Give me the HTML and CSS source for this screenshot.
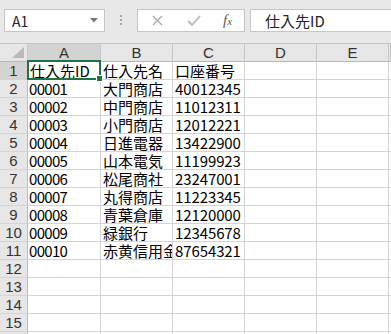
FILE: index.html
```html
<!DOCTYPE html>
<html lang="ja">
<head>
<meta charset="utf-8">
<title>Sheet</title>
<link rel="stylesheet" href="styles.css">
</head>
<body>
<div class="app">
  <div class="toolbar">
    <div class="namebox">
      <span class="nb-text">A1</span>
      <svg class="nb-arrow" width="8" height="5" viewBox="0 0 8 5"><path d="M0 0H8L4 4.5Z" fill="#7a7a7a"/></svg>
    </div>
    <div class="grip">
      <svg width="3" height="11" viewBox="0 0 3 11"><rect x="0" y="0" width="2" height="2" fill="#a6a6a6"/><rect x="0" y="4" width="2" height="2" fill="#a6a6a6"/><rect x="0" y="8" width="2" height="2" fill="#a6a6a6"/></svg>
    </div>
    <div class="fbuttons">
      <svg class="fb-x" width="11" height="11" viewBox="0 0 11 11"><path d="M1 1L10 10M10 1L1 10" stroke="#a8a8a8" stroke-width="1.3" fill="none"/></svg>
      <svg class="fb-ok" width="14" height="11" viewBox="0 0 14 11"><path d="M1 6L5 10L13 1" stroke="#b8b8b8" stroke-width="1.8" fill="none"/></svg>
      <span class="fx">f<span class="fx-x">x</span></span>
    </div>
    <div class="finput">仕入先ID</div>
  </div>
  <div class="sheet">
    <div class="hc corner"><svg width="12" height="11" viewBox="0 0 12 11"><path d="M12 0V11H0Z" fill="#b9b9b9"/></svg></div>
    <div class="hc colh sel">A</div>
    <div class="hc colh">B</div>
    <div class="hc colh">C</div>
    <div class="hc colh">D</div>
    <div class="hc colh">E</div>
    <div class="hc colh rest"></div>

    <div class="rh sel">1</div>
    <div class="c a1">仕入先ID<div class="selbox"><div class="handle"></div></div></div>
    <div class="c">仕入先名</div>
    <div class="c">口座番号</div>
    <div class="c"></div><div class="c"></div><div class="c rest"></div>

    <div class="rh">2</div><div class="c na">00001</div><div class="c">大門商店</div><div class="c nc">40012345</div><div class="c"></div><div class="c"></div><div class="c rest"></div>
    <div class="rh">3</div><div class="c na">00002</div><div class="c">中門商店</div><div class="c nc">11012311</div><div class="c"></div><div class="c"></div><div class="c rest"></div>
    <div class="rh">4</div><div class="c na">00003</div><div class="c">小門商店</div><div class="c nc">12012221</div><div class="c"></div><div class="c"></div><div class="c rest"></div>
    <div class="rh">5</div><div class="c na">00004</div><div class="c">日進電器</div><div class="c nc">13422900</div><div class="c"></div><div class="c"></div><div class="c rest"></div>
    <div class="rh">6</div><div class="c na">00005</div><div class="c">山本電気</div><div class="c nc">11199923</div><div class="c"></div><div class="c"></div><div class="c rest"></div>
    <div class="rh">7</div><div class="c na">00006</div><div class="c">松尾商社</div><div class="c nc">23247001</div><div class="c"></div><div class="c"></div><div class="c rest"></div>
    <div class="rh">8</div><div class="c na">00007</div><div class="c">丸得商店</div><div class="c nc">11223345</div><div class="c"></div><div class="c"></div><div class="c rest"></div>
    <div class="rh">9</div><div class="c na">00008</div><div class="c">青葉倉庫</div><div class="c nc">12120000</div><div class="c"></div><div class="c"></div><div class="c rest"></div>
    <div class="rh">10</div><div class="c na">00009</div><div class="c">緑銀行</div><div class="c nc">12345678</div><div class="c"></div><div class="c"></div><div class="c rest"></div>
    <div class="rh">11</div><div class="c na">00010</div><div class="c">赤黄信用金庫</div><div class="c nc">87654321</div><div class="c"></div><div class="c"></div><div class="c rest"></div>
    <div class="rh">12</div><div class="c"></div><div class="c"></div><div class="c"></div><div class="c"></div><div class="c"></div><div class="c rest"></div>
    <div class="rh">13</div><div class="c"></div><div class="c"></div><div class="c"></div><div class="c"></div><div class="c"></div><div class="c rest"></div>
    <div class="rh">14</div><div class="c"></div><div class="c"></div><div class="c"></div><div class="c"></div><div class="c"></div><div class="c rest"></div>
    <div class="rh">15</div><div class="c"></div><div class="c"></div><div class="c"></div><div class="c"></div><div class="c"></div><div class="c rest"></div>
    <div class="rh">16</div><div class="c"></div><div class="c"></div><div class="c"></div><div class="c"></div><div class="c"></div><div class="c rest"></div>
  </div>
</div>
</body>
</html>
```
FILE: styles.css
```css
html, body {
  margin: 0;
  padding: 0;
  background: #ffffff;
  overflow: hidden;
}
.app {
  width: 391px;
  height: 334px;
  overflow: hidden;
  font-family: "Noto Sans CJK JP", "Noto Sans", sans-serif;
  color: #000;
}
.toolbar {
  border-bottom: 1px solid #c8c8c8;
  background: #e8e8e8;
  display: flex;
  align-items: flex-start;
  padding: 9px 0 0 4px;
  box-sizing: border-box;
  height: 44px;
}
.namebox {
  width: 101px;
  height: 23px;
  box-sizing: border-box;
  background: #fff;
  border: 1px solid #c6c6c6;
  display: flex;
  align-items: center;
  justify-content: space-between;
  padding: 0 6px 0 7px;
}
.nb-text {
  font-family: "Noto Sans CJK JP", sans-serif;
  font-size: 14px;
  color: #222;
  line-height: 1;
}
.nb-arrow {
  display: block;
}
.grip {
  width: 32px;
  height: 23px;
  display: flex;
  align-items: center;
  justify-content: center;
}
.grip svg { display: block; }
.fbuttons {
  width: 108px;
  height: 23px;
  box-sizing: border-box;
  background: #fff;
  border: 1px solid #c6c6c6;
  display: flex;
  align-items: center;
  padding-left: 14px;
}
.fbuttons svg { display: block; }
.fb-ok { margin-left: 24px; }
.fx {
  margin-left: 22px;
  font-family: "Liberation Serif", serif;
  font-style: italic;
  font-size: 15px;
  color: #5a5a5a;
  line-height: 1;
}
.fx-x {
  font-size: 11px;
}
.finput {
  flex: 1;
  margin-left: 5px;
  height: 23px;
  box-sizing: border-box;
  background: #fff;
  border: 1px solid #c6c6c6;
  border-right: none;
  padding-left: 14px;
  font-size: 15px;
  line-height: 21px;
  color: #222;
}
.sheet {
  display: grid;
  grid-template-columns: 28px 73px 72px 72px 72px 72px 1fr;
  grid-auto-rows: 18px;
}
.hc, .rh, .c {
  box-sizing: border-box;
  min-width: 0;
}
.hc {
  background: #e6e6e6;
  border-right: 1px solid #c6c6c6;
  border-bottom: 1px solid #b8b8b8;
  font-size: 15px;
  line-height: 17px;
  text-align: center;
  color: #333;
  font-family: "Liberation Sans", sans-serif;
}
.corner {
  display: flex;
  align-items: flex-end;
  justify-content: flex-end;
  padding: 0 3px 3px 0;
}
.corner svg { display: block; }
.hc.sel, .rh.sel {
  background: #d3d3d3;
}
.rh {
  background: #e6e6e6;
  border-right: 1px solid #bdbdbd;
  border-bottom: 1px solid #d4d4d4;
  font-family: "Liberation Sans", sans-serif;
  font-size: 15px;
  line-height: 17px;
  text-align: center;
  color: #333;
}
.c {
  border-right: 1px solid #d4d4d4;
  border-bottom: 1px solid #d4d4d4;
  font-size: 15px;
  line-height: 17px;
  padding-left: 2px;
  white-space: nowrap;
  overflow-x: clip;
  overflow-y: visible;
}
.c.rest { border-right: none; }
.na {
  font-size: 15px;
  letter-spacing: -0.7px;
  padding-left: 1px;
}
.nc {
  font-variant-numeric: tabular-nums;
  letter-spacing: -0.1px;
}
.a1 {
  position: relative;
  overflow: visible;
  padding-left: 2px;
}
.selbox {
  position: absolute;
  left: -1px;
  top: -2px;
  right: -1px;
  bottom: -1px;
  border: 2px solid #217346;
  pointer-events: none;
}
.handle {
  position: absolute;
  right: -4px;
  bottom: -4px;
  width: 5px;
  height: 5px;
  background: #217346;
  border: 1px solid #fff;
}
```
